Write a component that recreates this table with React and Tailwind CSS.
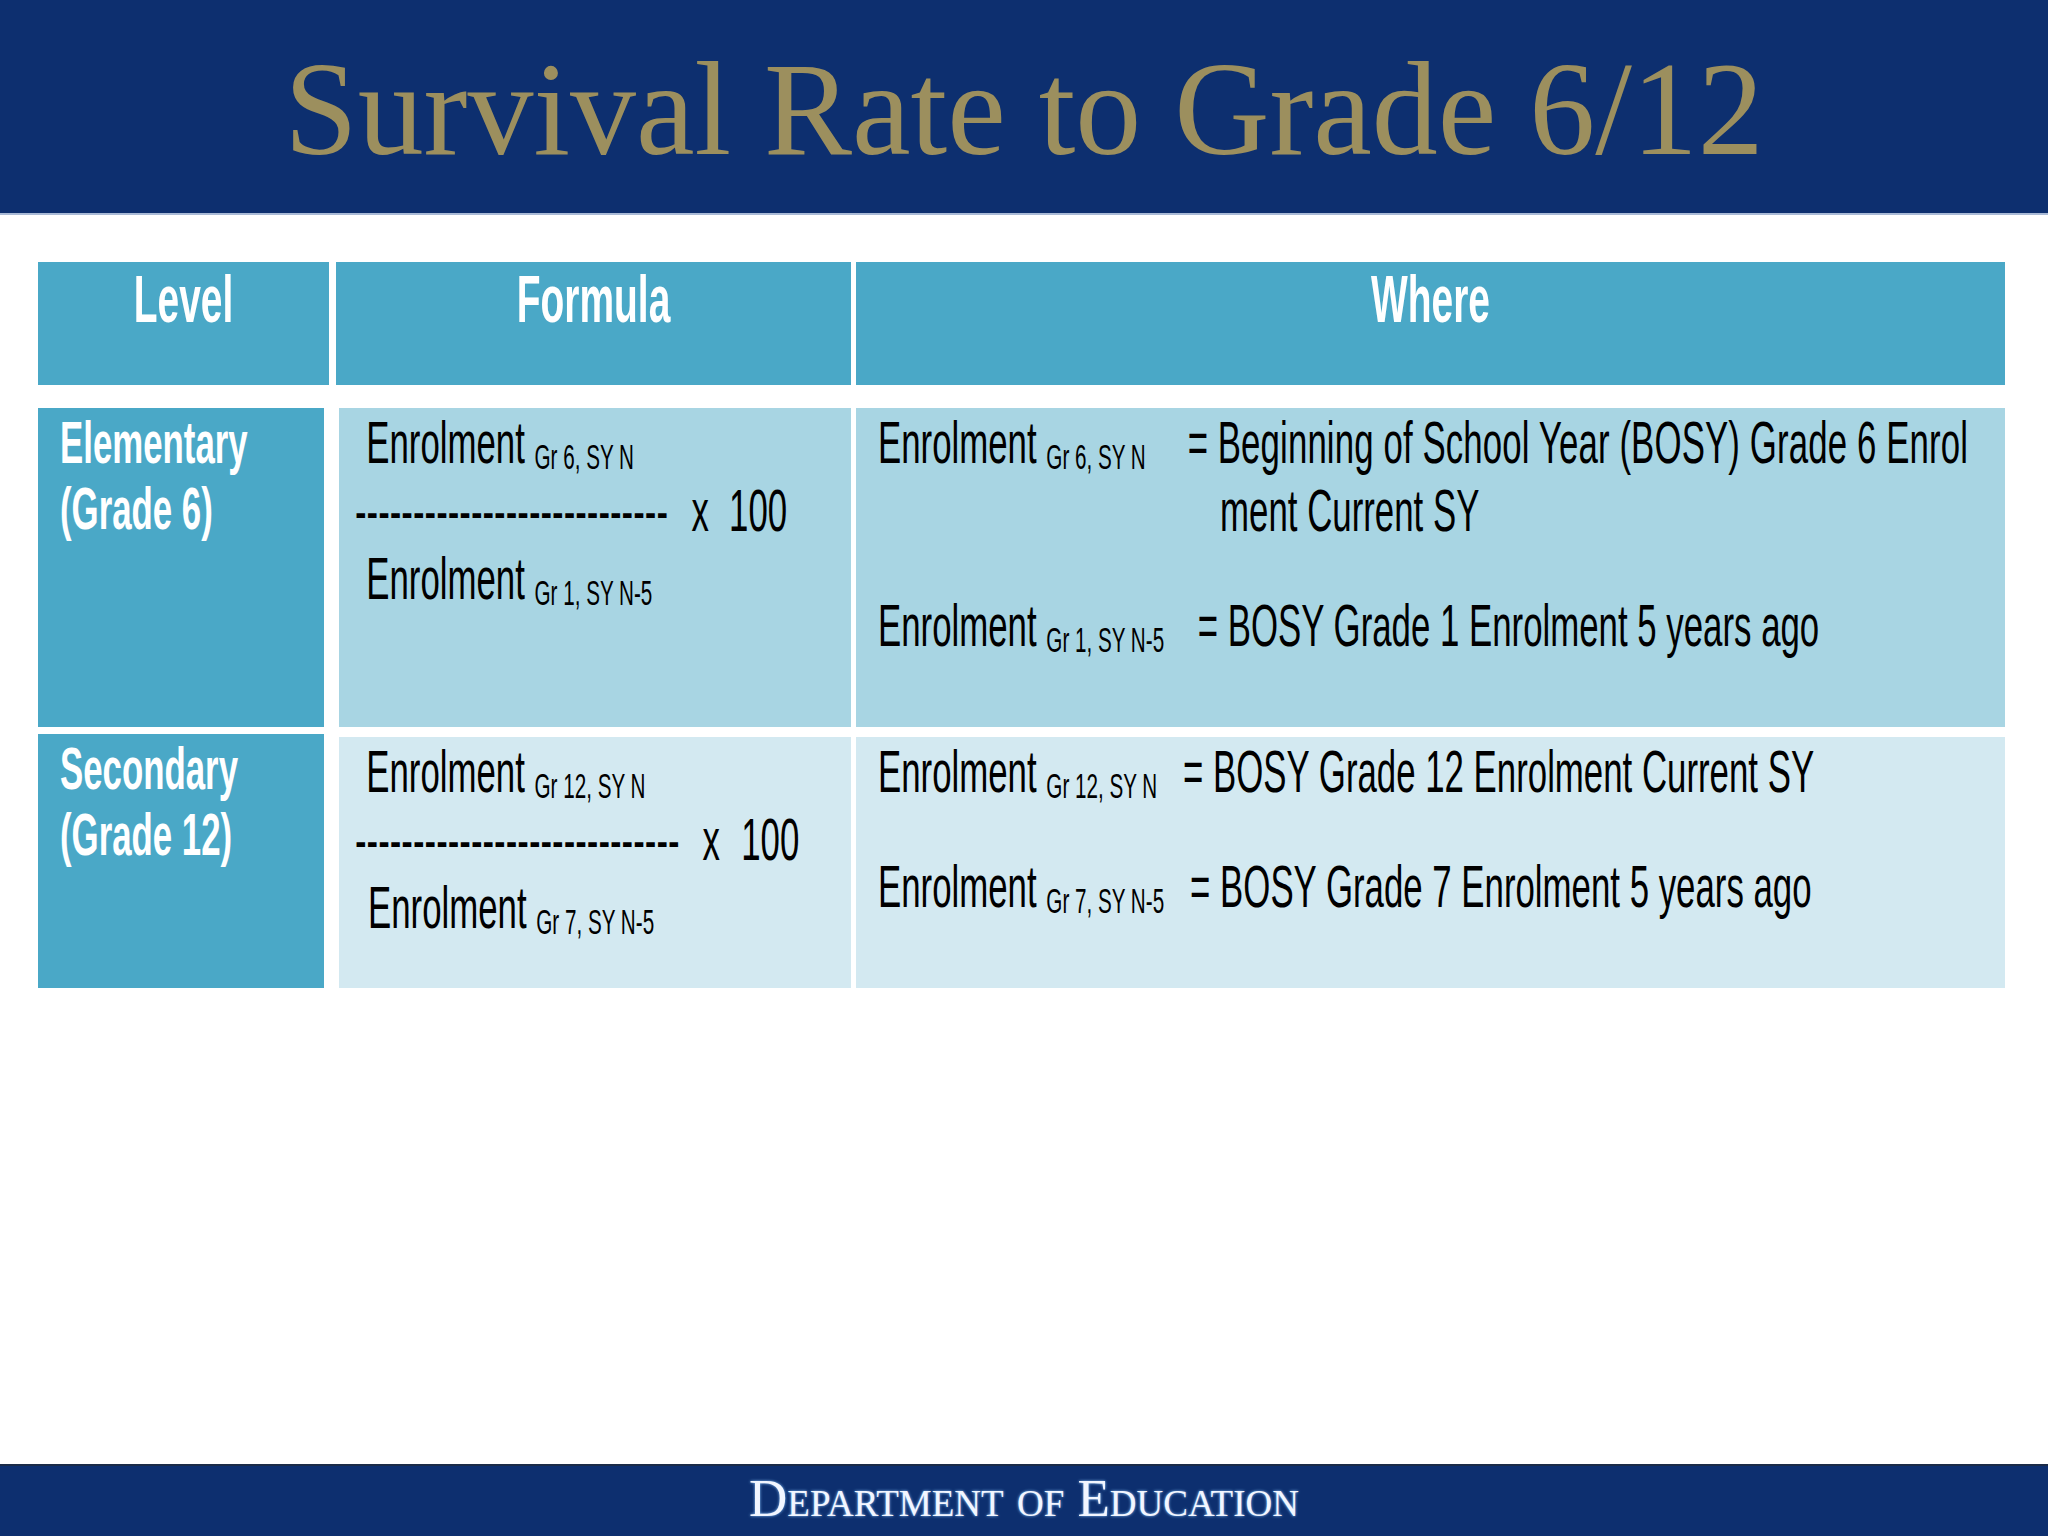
import React from 'react';

// Slide: survival rate formulas. Text in the table is horizontally squeezed, like the source slide.
const sans = "font-['Liberation_Sans',Arial,sans-serif]";
const serif = "font-['Liberation_Serif','Times_New_Roman',serif]";

const Sub = ({ children }) => (
  <span className="text-[35px] leading-none align-[-6px]">{children}</span>
);

const Term = ({ sub }) => (
  <>
    Enrolment <Sub>{sub}</Sub>
  </>
);

const dashes = (n) => '-'.repeat(n);

const HeadCell = ({ w, className = '', children }) => (
  <div className={`${w} h-full bg-[#4aa8c7] pt-[1px] ${className}`}>
    <div className={`scale-x-[0.59] text-center whitespace-pre text-white font-bold text-[66px] leading-[72px] ${sans}`}>
      {children}
    </div>
  </div>
);

const LevelCell = ({ className = '', lines }) => (
  <div className={`w-[286px] bg-[#4aa8c7] pl-[22px] pt-[2px] ${className}`}>
    <div className={`origin-left scale-x-[0.59] whitespace-pre text-white font-bold text-[59px] leading-[66px] ${sans}`}>
      {lines.map((l) => (
        <div key={l}>{l}</div>
      ))}
    </div>
  </div>
);

const Formula = ({ top, bottom, n, gapX, gap100, indent2 }) => (
  <div className={`origin-left scale-x-[0.59] whitespace-pre text-black text-[59px] leading-[68px] ${sans}`}>
    <div className="pl-[19px]">
      <Term sub={top} />
    </div>
    <div>
      {dashes(n)}
      <span style={{ marginLeft: gapX }}>x</span>
      <span style={{ marginLeft: gap100 }}>100</span>
    </div>
    <div style={{ paddingLeft: indent2 }}>
      <Term sub={bottom} />
    </div>
  </div>
);

export default function App() {
  return (
    <div className="w-[2048px] h-[1536px] overflow-hidden bg-white flex flex-col">
      <div className="h-[215px] shrink-0 bg-[#0d2f6f] border-b-2 border-[#a9bad6] pt-[42px] text-center">
        <div className={`scale-x-[0.984] text-[134px] leading-[134px] text-[#9c8f5e] ${serif}`}>
          Survival Rate to Grade 6/12
        </div>
      </div>

      <div className="flex-1 pt-[47px] pl-[38px]">
        {/* header row */}
        <div className="flex h-[123px]">
          <HeadCell w="w-[291px]">Level</HeadCell>
          <HeadCell w="w-[515px]" className="ml-[7px]">Formula</HeadCell>
          <HeadCell w="w-[1149px]" className="ml-[5px]">Where</HeadCell>
        </div>

        {/* elementary */}
        <div className="flex h-[319px] mt-[23px]">
          <LevelCell lines={['Elementary', '(Grade 6)']} />
          <div className="w-[512px] ml-[15px] bg-[#a8d5e3] pl-[16px] pt-[1px]">
            <Formula top="Gr 6, SY N" bottom="Gr 1, SY N-5" n={27} gapX={40} gap100={34} indent2={19} />
          </div>
          <div className="w-[1149px] ml-[5px] bg-[#a8d5e3] pl-[22px] pt-[1px]">
            <div className={`origin-left scale-x-[0.59] whitespace-pre text-black text-[59px] leading-[68px] ${sans}`}>
              <div className="flex">
                <span className="w-[525px] shrink-0">
                  <Term sub="Gr 6, SY N" />
                </span>
                <span>= </span>
                <div>
                  <div className="tracking-[0.2px]">Beginning of School Year (BOSY) Grade 6 Enrol</div>
                  <div className="pl-[4px]">ment Current SY</div>
                </div>
              </div>
              <div className="flex mt-[47px]">
                <span className="w-[542px] shrink-0">
                  <Term sub="Gr 1, SY N-5" />
                </span>
                <span>= BOSY Grade 1 Enrolment 5 years ago</span>
              </div>
            </div>
          </div>
        </div>

        {/* secondary */}
        <div className="flex items-end h-[254px] mt-[7px]">
          <LevelCell className="h-[254px]" lines={['Secondary', '(Grade 12)']} />
          <div className="w-[512px] h-[251px] ml-[15px] bg-[#d3e9f1] pl-[16px] pt-[1px]">
            <Formula top="Gr 12, SY N" bottom="Gr 7, SY N-5" n={28} gapX={39} gap100={36} indent2={22} />
          </div>
          <div className="w-[1149px] h-[251px] ml-[5px] bg-[#d3e9f1] pl-[22px] pt-[1px]">
            <div className={`origin-left scale-x-[0.59] whitespace-pre text-black text-[59px] leading-[68px] ${sans}`}>
              <div className="flex">
                <span className="w-[517px] shrink-0">
                  <Term sub="Gr 12, SY N" />
                </span>
                <span>= BOSY Grade 12 Enrolment Current SY</span>
              </div>
              <div className="flex mt-[47px]">
                <span className="w-[529px] shrink-0">
                  <Term sub="Gr 7, SY N-5" />
                </span>
                <span>= BOSY Grade 7 Enrolment 5 years ago</span>
              </div>
            </div>
          </div>
        </div>
      </div>

      <div className="h-[72px] shrink-0 bg-[#0d2f6f] border-t-2 border-[#1b2b48] pt-[6px] text-center">
        <span className={`text-[53px] leading-[53px] [font-variant:small-caps] text-[#f2f6ff] [text-shadow:0_0_3px_#8fc8ff] ${serif}`}>
          Department of Education
        </span>
      </div>
    </div>
  );
}
